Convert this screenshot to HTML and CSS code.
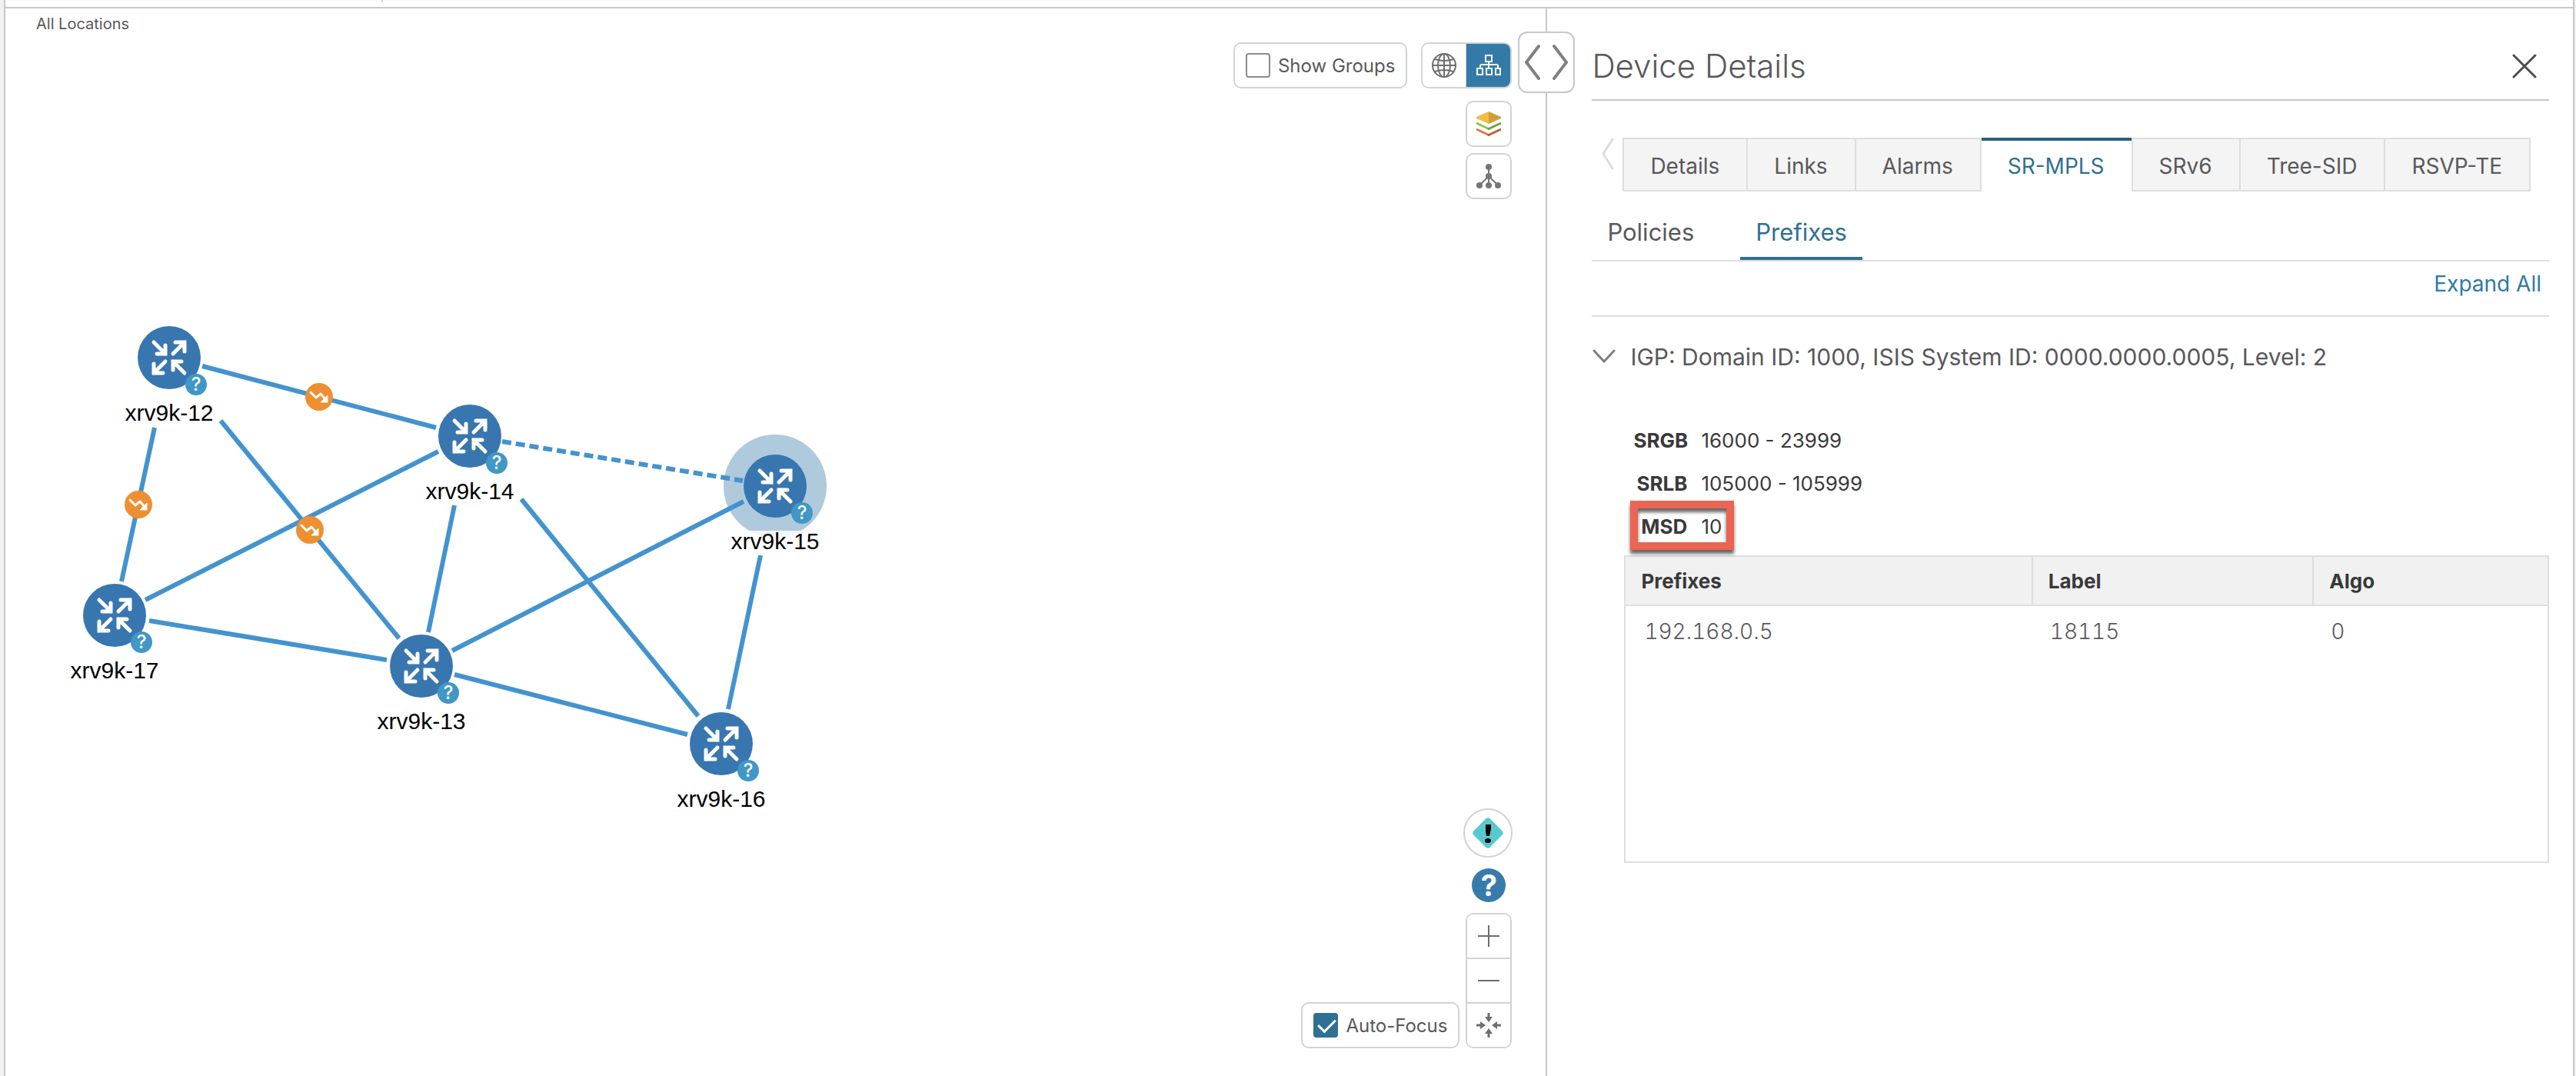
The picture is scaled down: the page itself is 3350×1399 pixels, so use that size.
FILE: index.html
```html
<!DOCTYPE html>
<html lang="en">
<head>
  <meta charset="UTF-8" />
  <meta name="viewport" content="width=device-width, initial-scale=1.0"/>
  <title>Topology</title>
  <link rel="stylesheet" href="styles.css">
</head>
<body>

  <div class="app">
    <div class="topbar"><span class="tick"></span></div>

    <div class="panes">
      <!-- Topology map -->
      <main class="map">
        <div class="breadcrumb">All Locations</div>

        <svg class="topology" width="1200" height="1100" viewBox="0 0 1200 1100">
          <defs>
            <g id="router">
              <circle r="41" fill="#3876af"/>
              <path d="M-20 -20L-5 -5M-16 -5H-5V-16M5 -5L20 -20M8 -20H20V-8M-5 5L-20 20M-20 8V20H-8M20 20L5 5M16 5H5V16" fill="none" stroke="#fff" stroke-width="5" stroke-linecap="round"/>
              <circle cx="35" cy="35" r="14" fill="#4197c6"/>
              <text class="badge" x="35" y="43">?</text>
            </g>
            <g id="degraded">
              <circle r="18" fill="#ee8f31"/>
              <path d="M-11 -6L-4 1L2 -4L8 3" fill="none" stroke="#fff" stroke-width="3" stroke-linecap="round" stroke-linejoin="round"/>
              <path d="M11 -2V7H2Z" fill="#fff" stroke="#fff" stroke-linejoin="round"/>
            </g>
          </defs>

          <circle cx="1001" cy="621" r="67" fill="#afc9dd"/>

          <g class="links">
            <path d="M256 465L560 545"/>
            <path d="M194 545L151 745"/>
            <path d="M280 536L512 819"/>
            <path d="M182 769L563 576"/>
            <path d="M187 796L496 847"/>
            <path d="M584 646L550 811"/>
            <path d="M671 638L901 920"/>
            <path d="M960 641L581 835"/>
            <path d="M982 711L940 911"/>
            <path d="M584 866L887 944"/>
            <path class="down" d="M646 563L959 614"/>
          </g>

          <use href="#degraded" x="408" y="505"/>
          <use href="#degraded" x="173" y="645"/>
          <use href="#degraded" x="396" y="678"/>

          <rect x="937" y="679" width="128" height="32" fill="#fff" opacity=".85"/>
          <use href="#router" x="213" y="454"/>
          <use href="#router" x="604" y="556"/>
          <use href="#router" x="1001" y="621"/>
          <use href="#router" x="142" y="789"/>
          <use href="#router" x="541" y="855"/>
          <use href="#router" x="931" y="956"/>

          <g class="names">
            <text x="213" y="536">xrv9k-12</text>
            <text x="604" y="638">xrv9k-14</text>
            <text x="1001" y="703">xrv9k-15</text>
            <text x="142" y="871">xrv9k-17</text>
            <text x="541" y="937">xrv9k-13</text>
            <text x="931" y="1038">xrv9k-16</text>
          </g>
        </svg>

        <div class="tools tools-top">
          <div class="tool-row">
            <label class="check"><input type="checkbox"> Show Groups</label>
            <div class="switch">
              <button aria-label="Geo map">
                <svg width="32" height="32" viewBox="0 0 32 32" fill="none" stroke="#6e6e6e" stroke-width="2">
                  <circle cx="16" cy="16" r="15"/>
                  <ellipse cx="16" cy="16" rx="8" ry="15"/>
                  <path d="M16 1V31M1 16H31M4 8Q16 12 28 8M4 24Q16 20 28 24"/>
                </svg>
              </button>
              <button class="on" aria-label="Logical map">
                <svg width="32" height="32" viewBox="0 0 32 32" fill="none" stroke="#fff" stroke-width="2">
                  <path d="M12 3H20V11H12ZM1 20H8V28H1ZM13 20H20V28H13ZM25 20H31V28H25ZM16 11V20M5 20V17Q5 15 7 15H26Q28 15 28 17V20"/>
                </svg>
              </button>
            </div>
          </div>
          <button class="tool layers" aria-label="Layers">
            <svg width="32" height="32" viewBox="0 0 32 32">
              <path d="M16 0L0 7V9L16 16Z" fill="#f4bc42"/>
              <path d="M16 0L32 7V9L16 16Z" fill="#cf9f38"/>
              <path d="M1 15.500L16 22.500" stroke="#8cc84b" stroke-width="3" stroke-linecap="round"/>
              <path d="M31 15.500L16 22.500" stroke="#71a13c" stroke-width="3" stroke-linecap="round"/>
              <path d="M1 23.500L16 30.500" stroke="#e8703a" stroke-width="3" stroke-linecap="round"/>
              <path d="M31 23.500L16 30.500" stroke="#bf5b30" stroke-width="3" stroke-linecap="round"/>
            </svg>
          </button>
          <button class="tool" aria-label="Topology tree">
            <svg width="32" height="32" viewBox="0 0 32 32" fill="#757575">
              <path d="M16 4V28M16 16L4 28M16 16L28 28" stroke="#757575" stroke-width="2"/>
              <circle cx="16" cy="4" r="4"/><circle cx="16" cy="16" r="4"/>
              <circle cx="4" cy="28" r="4"/><circle cx="16" cy="28" r="4"/><circle cx="28" cy="28" r="4"/>
            </svg>
          </button>
        </div>

        <div class="tools tools-bottom">
          <button class="alert" aria-label="Alerts">
            <svg width="44" height="44" viewBox="0 0 44 44">
              <rect x="7" y="7" width="30" height="30" rx="4" transform="rotate(45 22 22)" fill="#58c9cf"/>
              <path d="M19 11H26V17L24 26H20L19 20Z" fill="#000"/>
              <ellipse cx="22" cy="32" rx="4" ry="3" fill="#000"/>
            </svg>
          </button>
          <button class="help">?</button>
          <div class="tool-row">
            <label class="check"><input type="checkbox" checked> Auto-Focus</label>
            <div class="zoom">
              <button aria-label="Zoom in">
                <svg width="30" height="30" viewBox="0 0 30 30" stroke="#6e6e6e" stroke-width="2"><path d="M1 15H29M15 1V29"/></svg>
              </button>
              <button aria-label="Zoom out">
                <svg width="30" height="30" viewBox="0 0 30 30" stroke="#6e6e6e" stroke-width="2"><path d="M1 15H29"/></svg>
              </button>
              <button aria-label="Fit to screen">
                <svg width="32" height="32" viewBox="0 0 32 32" fill="#6e6e6e">
                  <path d="M16 1V6M16 31V26M1 16H6M31 16H26" stroke="#6e6e6e" stroke-width="3" stroke-linecap="round"/>
                  <path d="M11 5H21L16 12ZM11 27H21L16 20ZM5 11V21L12 16ZM27 11V21L20 16Z"/>
                </svg>
              </button>
            </div>
          </div>
        </div>
      </main>

      <!-- Device details -->
      <aside class="details">
        <button class="resize" aria-label="Resize panel">
          <svg width="56" height="48" viewBox="0 0 56 48" fill="none" stroke="#808080" stroke-width="4" stroke-linecap="round" stroke-linejoin="round"><path d="M18 3L2 24L18 45M38 3L54 24L38 45"/></svg>
        </button>

        <header>
          <h1>Device Details</h1>
          <button class="close" aria-label="Close">
            <svg width="32" height="32" viewBox="0 0 32 32" stroke="#4d4d4f" stroke-width="3" stroke-linecap="round"><path d="M2 2L30 30M30 2L2 30"/></svg>
          </button>
        </header>

        <div class="tabs">
          <button class="prev" aria-label="Previous tabs">
            <svg width="18" height="42" viewBox="0 0 18 42" fill="none" stroke="#dcdcdc" stroke-width="3" stroke-linecap="round"><path d="M15 2L3 21L15 40"/></svg>
          </button>
          <button class="tab">Details</button>
          <button class="tab">Links</button>
          <button class="tab">Alarms</button>
          <button class="tab active">SR-MPLS</button>
          <button class="tab">SRv6</button>
          <button class="tab">Tree-SID</button>
          <button class="tab">RSVP-TE</button>
        </div>

        <div class="subtabs">
          <button>Policies</button>
          <button class="active">Prefixes</button>
        </div>

        <div class="expand"><a href="#">Expand All</a></div>

        <button class="igp">
          <svg width="32" height="20" viewBox="0 0 32 20" fill="none" stroke="#808080" stroke-width="3" stroke-linecap="round"><path d="M3 2L16 16L29 2"/></svg>
          IGP: Domain ID: 1000, ISIS System ID: 0000.0000.0005, Level: 2
        </button>

        <dl class="facts">
          <div><dt>SRGB</dt><dd>16000 - 23999</dd></div>
          <div><dt>SRLB</dt><dd>105000 - 105999</dd></div>
          <div class="marked"><dt>MSD</dt><dd>10</dd></div>
        </dl>

        <div class="grid">
          <table>
            <thead>
              <tr><th class="col-prefix">Prefixes</th><th class="col-label">Label</th><th>Algo</th></tr>
            </thead>
            <tbody>
              <tr><td>192.168.0.5</td><td>18115</td><td>0</td></tr>
            </tbody>
          </table>
        </div>
      </aside>
    </div>
  </div>

</body>
</html>
```
FILE: styles.css
```css
* {
  box-sizing: border-box;
}

body {
  margin: 0;
  padding: 0 2px 0 5px;
  background: #f2f2f2;
  font-family: Inter, Arial, sans-serif;
  color: #58585b;
}

button {
  padding: 0;
  border: none;
  background: white;
  font-family: inherit;
  color: inherit;
  cursor: pointer;
}

svg {
  display: block;
}

.app {
  display: flex;
  flex-direction: column;
  min-height: 100vh;
  border: solid #c8c8c8;
  border-width: 0 2px;
  background: white;
}

.topbar {
  height: 11px;
  padding-left: 489px;
  border-bottom: 2px solid #c8c8c8;
}

.tick {
  display: block;
  width: 2px;
  height: 3px;
  background: #d3d3d3;
}

.panes {
  flex: 1;
  display: grid;
  grid-template-columns: 3fr 2fr;
}

/* map */
.map {
  position: relative;
}

.breadcrumb {
  position: absolute;
  top: 8px;
  left: 40px;
  font-size: 20px;
  line-height: 24px;
}

.links {
  fill: none;
  stroke: #4393cf;
  stroke-width: 6px;
}

.links .down {
  stroke-dasharray: 12 6;
}

.names {
  font-family: "Liberation Sans", Arial, sans-serif;
  font-size: 30px;
  text-anchor: middle;
  fill: black;
}

.badge {
  font-size: 24px;
  font-weight: 500;
  text-anchor: middle;
  fill: white;
}

.tools {
  position: absolute;
  right: 44px;
  display: flex;
  flex-direction: column;
  align-items: flex-end;
}

.tools-top {
  top: 44px;
  gap: 8px;
}

.tools-bottom {
  bottom: 36px;
}

.tool-row {
  display: flex;
  align-items: flex-end;
  gap: 8px;
}

.tools-top .tool-row {
  gap: 18px;
}

.check {
  display: flex;
  align-items: center;
  gap: 10px;
  height: 60px;
  padding: 0 14px;
  border: 2px solid #d3d3d3;
  border-radius: 10px;
  background: white;
  font-size: 24px;
}

.check input {
  appearance: none;
  width: 32px;
  height: 32px;
  margin: 0;
  border: 2px solid #8c8c8c;
  border-radius: 4px;
}

.check input:checked {
  border: none;
  background: #2f7094;
}

.check input:checked::after {
  content: "";
  display: block;
  width: 10px;
  height: 19px;
  margin: 3px 0 0 11px;
  border: solid white;
  border-width: 0 3px 3px 0;
  transform: rotate(45deg);
}

.switch, .zoom, .tool {
  border: 2px solid #d3d3d3;
  border-radius: 10px;
  overflow: hidden;
}

.switch {
  display: flex;
}

.switch button, .zoom button {
  display: grid;
  place-items: center;
  width: 56px;
  height: 56px;
}

.switch button + button {
  width: 58px;
  border-left: 1px solid #d3d3d3;
}

.switch .on {
  background: #337aa9;
}

.tool {
  display: grid;
  place-items: center;
  width: 60px;
  height: 60px;
}

.layers {
  margin-top: 8px;
}

.zoom button + button {
  height: 58px;
  border-top: 2px solid #d3d3d3;
}

.alert {
  display: grid;
  place-items: center;
  width: 64px;
  height: 64px;
  margin-right: -1px;
  border: 2px solid #d3d3d3;
  border-radius: 50%;
}

.help {
  width: 44px;
  height: 44px;
  margin: 14px 8px;
  border-radius: 50%;
  background: #377bab;
  color: white;
  font-size: 38px;
  font-weight: 700;
  line-height: 44px;
}

/* details */
.details {
  position: relative;
  padding: 0 31px 0 58px;
  border-left: 2px solid #c8c8c8;
}

.resize {
  position: absolute;
  top: 30px;
  left: -38px;
  display: grid;
  place-items: center;
  width: 74px;
  height: 80px;
  border: 2px solid #c8c8c8;
  border-radius: 12px;
}

.details header {
  display: flex;
  justify-content: space-between;
  align-items: center;
  padding: 47px 16px 15px 0;
  border-bottom: 2px solid #c8c8c8;
}

h1 {
  margin: 0;
  font-size: 42px;
  font-weight: 300;
  line-height: 56px;
}

.tabs {
  display: flex;
  margin-top: 48px;
}

.prev {
  width: 40px;
  height: 42px;
  padding-left: 12px;
}

.tab {
  height: 70px;
  padding: 4px 35px 0 34px;
  border: 2px solid #dedede;
  border-left-width: 0;
  background: #f4f4f4;
  font-size: 28px;
}

.prev + .tab {
  border-left-width: 2px;
}

.tab.active {
  padding-top: 2px;
  border-color: #21657f white white;
  border-width: 4px 0 2px;
  background: white;
  color: #2f7094;
}

.tab.active + .tab {
  border-left-width: 2px;
}

.subtabs {
  display: flex;
  gap: 40px;
  padding-top: 35px;
  border-bottom: 2px solid #dedede;
}

.subtabs button {
  padding: 0 20px 14px;
  border-bottom: 4px solid white;
  font-size: 31px;
  line-height: 36px;
}

.subtabs .active {
  border-color: #2f7094;
  color: #2f7094;
}

.expand {
  padding: 15px 10px 27px;
  border-bottom: 2px solid #dedede;
  text-align: right;
  font-size: 28px;
  line-height: 28px;
}

.expand a {
  color: #3079a8;
  text-decoration: none;
}

.igp {
  display: flex;
  align-items: center;
  gap: 18px;
  margin-top: 34px;
  font-size: 30px;
  line-height: 36px;
}

.facts {
  margin: 63px 0 9px 54px;
  font-size: 26px;
  line-height: 56px;
  color: #39393b;
}

.facts div {
  display: flex;
  gap: 18px;
  width: fit-content;
}

.facts dt {
  width: 70px;
  text-align: right;
  font-weight: 700;
}

.facts dd {
  margin: 0;
}

.marked {
  position: relative;
}

.marked::after {
  content: "";
  position: absolute;
  inset: -6px -16px -2px -4px;
  border: 10px solid #ec6453;
  box-shadow: 0 5px 4px rgba(0,0,0,0.6), inset 0 5px 4px rgba(0,0,0,0.6);
}

.grid {
  min-height: 400px;
  margin-left: 42px;
  border: 2px solid #dedede;
}

table {
  width: 100%;
  border-collapse: separate;
  border-spacing: 0;
  table-layout: fixed;
}

th, td {
  padding: 0 20px;
  text-align: left;
}

th {
  height: 64px;
  border-bottom: 2px solid #dedede;
  background: #f1f1f1;
  font-size: 26px;
  font-weight: 700;
  color: #39393b;
}

th + th {
  border-left: 2px solid #dedede;
}

.col-prefix {
  width: 44%;
}

.col-label {
  width: 30.5%;
}

td {
  height: 66px;
  padding: 0 24px;
  font-size: 28px;
  font-weight: 300;
  font-variant-numeric: tabular-nums;
}
```
